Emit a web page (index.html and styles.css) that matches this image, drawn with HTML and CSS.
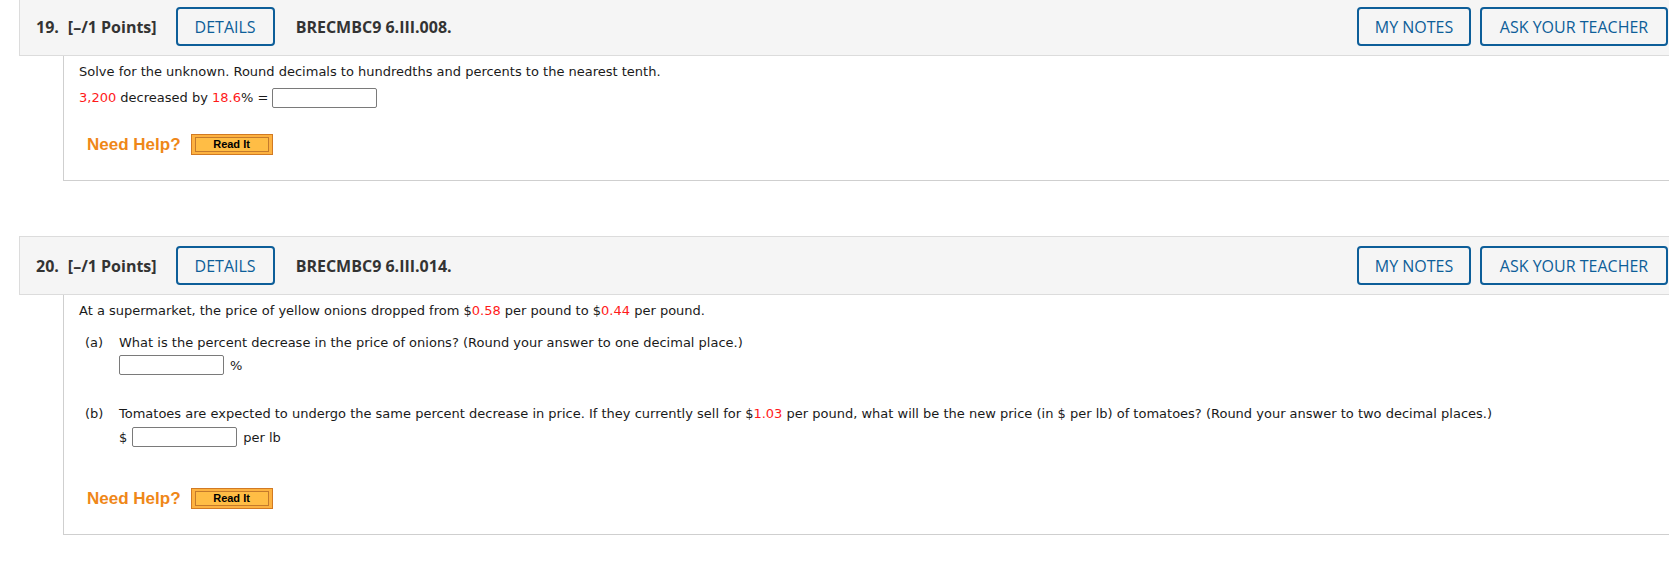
FILE: index.html
```html
<!DOCTYPE html>
<html>
<head>
<meta charset="utf-8">
<link rel="stylesheet" href="styles.css">
</head>
<body>
<div class="page">
  <div class="question q19">
    <div class="qhead">
      <span class="qnum">19.</span>
      <span class="qpts">[–/1 Points]</span>
      <button class="hbtn details">DETAILS</button>
      <span class="qcode">BRECMBC9 6.III.008.</span>
      <div class="hright">
        <button class="hbtn">MY NOTES</button>
        <button class="hbtn">ASK YOUR TEACHER</button>
      </div>
    </div>
    <div class="qbody">
      <div class="line">Solve for the unknown. Round decimals to hundredths and percents to the nearest tenth.</div>
      <div class="line eq"><span class="red">3,200</span>&nbsp;decreased by&nbsp;<span class="red">18.6</span>% =&nbsp;<input class="answer eq-input" type="text"></div>
      <div class="help">
        <span class="need">Need Help?</span>
        <button class="readit"><span class="readit-in">Read It</span></button>
      </div>
    </div>
  </div>

  <div class="question q20">
    <div class="qhead">
      <span class="qnum">20.</span>
      <span class="qpts">[–/1 Points]</span>
      <button class="hbtn details">DETAILS</button>
      <span class="qcode">BRECMBC9 6.III.014.</span>
      <div class="hright">
        <button class="hbtn">MY NOTES</button>
        <button class="hbtn">ASK YOUR TEACHER</button>
      </div>
    </div>
    <div class="qbody qbody2">
      <div class="line">At a supermarket, the price of yellow onions dropped from $<span class="red">0.58</span> per pound to $<span class="red">0.44</span> per pound.</div>
      <div class="part part-a">
        <span class="plabel">(a)</span>
        <span class="ptext">What is the percent decrease in the price of onions? (Round your answer to one decimal place.)</span>
      </div>
      <div class="ansrow ans-a"><input class="answer" type="text"><span class="unit">%</span></div>
      <div class="part part-b">
        <span class="plabel">(b)</span>
        <span class="ptext">Tomatoes are expected to undergo the same percent decrease in price. If they currently sell for $<span class="red">1.03</span> per pound, what will be the new price (in $ per lb) of tomatoes? (Round your answer to two decimal places.)</span>
      </div>
      <div class="ansrow ans-b"><span class="dollar">$</span><input class="answer" type="text"><span class="unit">per lb</span></div>
      <div class="help help2">
        <span class="need">Need Help?</span>
        <button class="readit"><span class="readit-in">Read It</span></button>
      </div>
    </div>
  </div>
</div>
</body>
</html>
```

FILE: styles.css
```css
html, body {
  margin: 0;
  padding: 0;
  background: #ffffff;
  overflow: hidden;
}

.page {
  margin-top: -3px;
  margin-left: 19px;
  width: 1660px;
}

.question {
  margin-bottom: 55px;
}

.qhead {
  display: flex;
  align-items: center;
  background: #f5f5f5;
  border: 1px solid #dcdcdc;
  padding: 9px 10px 9px 16px;
  font-family: "Open Sans", "Noto Sans", sans-serif;
  color: #333333;
}

.qnum {
  font-weight: 700;
  font-size: 16px;
  margin-right: 9px;
}

.qpts {
  font-weight: 700;
  font-size: 16px;
  margin-right: 19px;
}

.qcode {
  font-weight: 700;
  font-size: 16px;
  margin-left: 21px;
}

.hbtn {
  box-sizing: border-box;
  height: 39px;
  background: #f5f5f5;
  border: 2px solid #0d5e99;
  border-radius: 4px;
  color: #0d5e99;
  font-family: "Open Sans", "Noto Sans", sans-serif;
  font-size: 16px;
  padding: 0 16px;
  cursor: pointer;
}

.details {
  width: 99px;
  padding: 0;
}

.hright {
  margin-left: auto;
  display: flex;
  gap: 9px;
}

.hright .hbtn:first-child {
  width: 114px;
  padding: 0;
}

.hright .hbtn:last-child {
  width: 188px;
  padding: 0;
}

.qbody {
  margin-left: 44px;
  border-left: 1px solid #cfcfcf;
  border-right: 1px solid #cfcfcf;
  border-bottom: 1px solid #cfcfcf;
  padding: 7px 15px 25px 15px;
  font-family: "DejaVu Sans", Verdana, sans-serif;
  font-size: 13px;
  color: #1a1a1a;
}

.qbody2 {
  padding-bottom: 25px;
}

.line {
  line-height: 18px;
}

.eq {
  margin-top: 6px;
  height: 22px;
  display: flex;
  align-items: center;
}

.eq-input {
  margin-left: 3px;
}

.red {
  color: #ff1a1a;
}

.answer {
  box-sizing: border-box;
  width: 105px;
  height: 20px;
  border: 1px solid #7a7a7a;
  border-radius: 2px;
  background: #ffffff;
  margin: 0;
  padding: 0 3px;
}

.help {
  margin-top: 25px;
  margin-left: 8px;
  display: flex;
  align-items: center;
  height: 21px;
}

.need {
  font-family: "Liberation Sans", Arial, sans-serif;
  font-weight: 700;
  font-size: 17px;
  color: #ef8718;
  margin-right: 10px;
}

.readit {
  box-sizing: border-box;
  width: 82px;
  height: 21px;
  background: #fdb240;
  border: 1px solid #d27a23;
  padding: 2px 3px;
  margin: 0;
  display: flex;
  cursor: pointer;
}

.readit-in {
  flex: 1;
  border: 1px solid #c47a2c;
  background: #ffbd45;
  font-family: "Liberation Sans", Arial, sans-serif;
  font-weight: 700;
  font-size: 11px;
  line-height: 13px;
  color: #000000;
  text-align: center;
}

.part {
  display: flex;
  line-height: 18px;
}

.part-a {
  margin-top: 14px;
}

.part-b {
  margin-top: 30px;
}

.plabel {
  width: 34px;
  margin-left: 6px;
  flex: none;
}

.ansrow {
  display: flex;
  align-items: center;
  height: 20px;
  margin-left: 40px;
  margin-top: 3px;
}

.ans-b {
  margin-top: 4px;
}

.unit {
  margin-left: 6px;
}

.dollar {
  margin-right: 5px;
}

.help2 {
  margin-top: 41px;
}
```
